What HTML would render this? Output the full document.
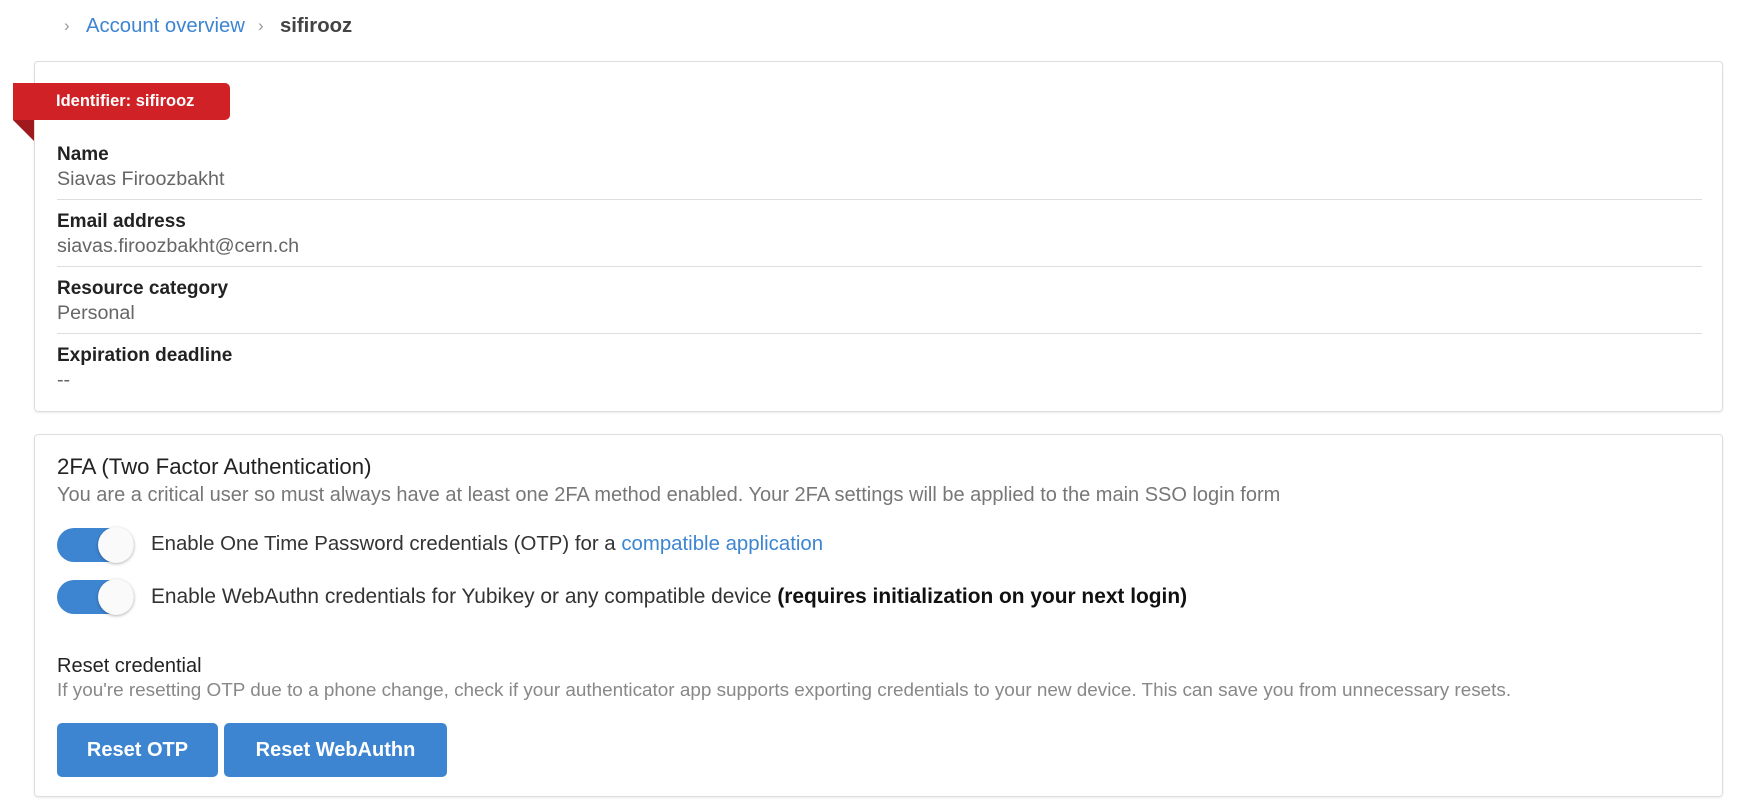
<!DOCTYPE html>
<html><head><meta charset="utf-8"><style>
*{box-sizing:border-box;margin:0;padding:0}
body{width:1741px;height:803px;background:#fff;font-family:"Liberation Sans",sans-serif;color:#222;position:relative;overflow:hidden}
.abs{position:absolute;white-space:nowrap}
.card{position:absolute;left:34px;width:1689px;border:1px solid #ddd;border-radius:4px;box-shadow:0 1px 2px rgba(0,0,0,.08)}
.lbl{font-weight:bold;font-size:19px;color:#222}
.val{font-size:19.7px;color:#666}
.sep{position:absolute;left:57px;width:1645px;height:1px;background:#ddd}
.tog{position:absolute;left:57px;width:77px;height:34px;border-radius:17px;background:#3d85d1}
.tog::after{content:"";position:absolute;right:0;top:-1px;width:36px;height:36px;border-radius:50%;background:#fafafa;box-shadow:0 1px 3px rgba(0,0,0,.3)}
.btn{position:absolute;top:723px;height:54px;background:#3d85d1;border-radius:5px;color:#fff;font-weight:bold;font-size:20px;display:flex;align-items:center;justify-content:center}
</style></head><body>
<div class="abs" style="left:64px;top:16px;font-size:17px;color:#999">›</div>
<div class="abs" style="left:86px;top:15px;font-size:20.3px;color:#3d85d1">Account overview</div>
<div class="abs" style="left:258px;top:16px;font-size:17px;color:#999">›</div>
<div class="abs" style="left:280px;top:15px;font-size:20.3px;color:#444;font-weight:bold">sifirooz</div>

<div class="card" style="top:61px;height:351px"></div>
<div class="abs" style="left:13px;top:83px;width:217px;height:37px;background:#d02226;border-radius:0 5px 5px 0;color:#fff;font-weight:bold;font-size:16.5px;line-height:37px;padding-left:43px">Identifier: sifirooz</div>
<svg class="abs" style="left:13px;top:120px" width="22" height="22"><polygon points="0,0 21,0 21,21" fill="#a01a1d"/></svg>

<div class="abs lbl" style="left:57px;top:144px">Name</div>
<div class="abs val" style="left:57px;top:168px">Siavas Firoozbakht</div>
<div class="sep" style="top:199px"></div>
<div class="abs lbl" style="left:57px;top:211px">Email address</div>
<div class="abs val" style="left:57px;top:235px">siavas.firoozbakht@cern.ch</div>
<div class="sep" style="top:266px"></div>
<div class="abs lbl" style="left:57px;top:278px">Resource category</div>
<div class="abs val" style="left:57px;top:302px">Personal</div>
<div class="sep" style="top:333px"></div>
<div class="abs lbl" style="left:57px;top:345px">Expiration deadline</div>
<div class="abs val" style="left:57px;top:369px">--</div>

<div class="card" style="top:434px;height:363px"></div>
<div class="abs" style="left:57px;top:454px;font-size:22.2px;color:#222">2FA (Two Factor Authentication)</div>
<div class="abs" style="left:57px;top:484px;font-size:20px;color:#777">You are a critical user so must always have at least one 2FA method enabled. Your 2FA settings will be applied to the main SSO login form</div>
<div class="tog" style="top:528px"></div>
<div class="abs" style="left:151px;top:533px;font-size:20.4px;color:#333">Enable One Time Password credentials (OTP) for a <span style="color:#3d85d1">compatible application</span></div>
<div class="tog" style="top:580px"></div>
<div class="abs" style="left:151px;top:585px;font-size:20.9px;color:#333">Enable WebAuthn credentials for Yubikey or any compatible device <b style="color:#111">(requires initialization on your next login)</b></div>
<div class="abs" style="left:57px;top:655px;font-size:20px;color:#222">Reset credential</div>
<div class="abs" style="left:57px;top:680px;font-size:18.9px;color:#888">If you're resetting OTP due to a phone change, check if your authenticator app supports exporting credentials to your new device. This can save you from unnecessary resets.</div>
<div class="btn" style="left:57px;width:161px">Reset OTP</div>
<div class="btn" style="left:224px;width:223px">Reset WebAuthn</div>
</body></html>
